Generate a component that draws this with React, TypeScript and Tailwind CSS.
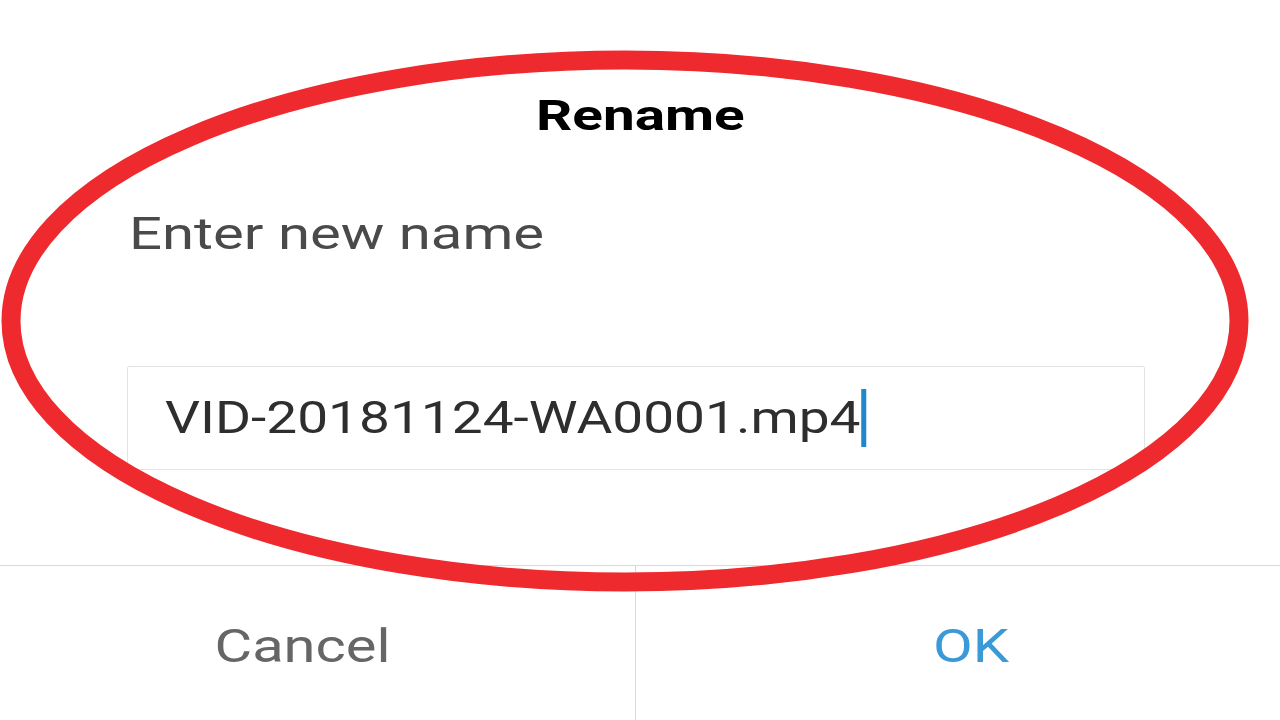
export default function App() {
  return (
    <div className="relative w-[1280px] h-[720px] overflow-hidden bg-white font-['Roboto','Liberation_Sans',sans-serif]">
      <div className="flex flex-col h-full">
        {/* Title */}
        <div className="pt-[95px] text-center text-[42px] leading-none font-bold text-black">
          <span className="inline-block scale-x-[1.35] origin-center">Rename</span>
        </div>

        {/* Message */}
        <div className="mt-[74px] pl-[129px] text-[45px] leading-none text-[#4a4a4a]">
          <span className="inline-block scale-x-[1.29] origin-left">Enter new name</span>
        </div>

        {/* Input */}
        <div className="mt-[110px] ml-[127px] w-[1018px] h-[104px] border border-[#e4e4e4] rounded-[2px] flex items-center pl-[37px]">
          <span className="inline-flex items-center scale-x-[1.25] origin-left text-[44px] leading-none text-[#2e2e2e]">
            VID-20181124-WA0001.mp4
            <span className="ml-[1px] w-[4px] h-[58px] bg-[#1e88c8]" />
          </span>
        </div>

        {/* Buttons */}
        <div className="mt-[95px] flex flex-1 border-t border-[#d9d9d9]">
          <div className="w-[635px] flex items-center justify-center pt-[4px] pr-[30px] text-[47px] leading-none text-[#666666]">
            <span className="inline-block scale-x-[1.23] origin-center">Cancel</span>
          </div>
          <div className="flex-1 flex items-center justify-center pt-[4px] pl-[25px] border-l border-[#d9d9d9] text-[47px] leading-none text-[#3a9ad8]">
            <span className="inline-block scale-x-[1.23] origin-center">OK</span>
          </div>
        </div>
      </div>

      {/* Red annotation ring */}
      <svg className="absolute inset-0 pointer-events-none" width="1280" height="720" viewBox="0 0 1280 720">
        <ellipse cx="625" cy="321" rx="614" ry="261" fill="none" stroke="#ee2a2e" strokeWidth="19" />
      </svg>
    </div>
  )
}
